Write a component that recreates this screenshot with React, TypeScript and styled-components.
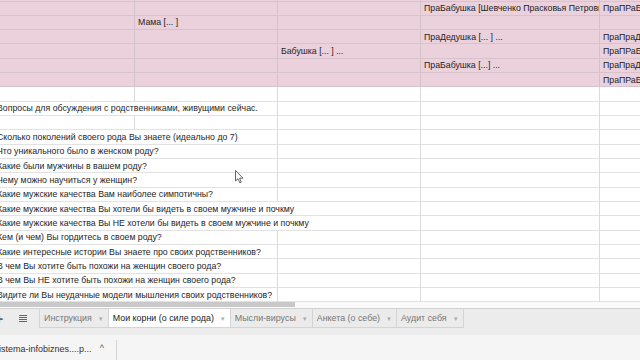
import React from "react";
import styled, { createGlobalStyle, css } from "styled-components";

const GlobalStyle = createGlobalStyle`
  html, body { margin: 0; padding: 0; background: #fff; overflow: hidden; }
  body { font-family: "Liberation Sans", Arial, sans-serif; }
`;

const ROW_H = 14.34;
const COLS = "141px 143px 143px 179px 120px";

const Page = styled.div`
  position: relative;
  width: 640px;
  height: 360px;
  overflow: hidden;
  display: flex;
  flex-direction: column;
  background: #fff;
`;

const SheetArea = styled.div`
  height: 302px;
  overflow: hidden;
  flex: none;
`;

const Rows = styled.div`
  margin-top: -12.84px;
  margin-left: -6px;
  display: flex;
  flex-direction: column;
`;

const Row = styled.div<{ $pink?: boolean }>`
  display: grid;
  grid-template-columns: ${COLS};
  height: ${ROW_H}px;
  flex: none;
  background: ${(p) => (p.$pink ? "#ead1dc" : "#fff")};
  --hline: ${(p) => (p.$pink ? "#d6c3cb" : "#e2e2e2")};
  --vline: ${(p) => (p.$pink ? "#d3c3c9" : "#dadada")};
`;

const Cell = styled.div<{ $span?: number }>`
  box-sizing: border-box;
  grid-column: span ${(p) => p.$span ?? 1};
  border-right: 1px solid var(--vline);
  border-bottom: 1px solid var(--hline);
  padding: 1.5px 3px 0 3px;
  font-size: 8.75px;
  line-height: ${ROW_H - 2.5}px;
  color: #1e1e1e;
  white-space: nowrap;
  overflow: hidden;
`;

const ScrollTrack = styled.div`
  height: 6px;
  flex: none;
  background: #fafafa;
`;

const ScrollThumb = styled.div`
  width: 295px;
  height: 5px;
  background: #c9c9c9;
`;

const TabBar = styled.div`
  height: 27px;
  flex: none;
  box-sizing: border-box;
  border-top: 1px solid #d2d2d2;
  background: #ececec;
  display: flex;
  align-items: flex-start;
`;

const AddBtn = styled.div`
  width: 12px;
  margin-left: -7px;
  height: 19px;
  display: flex;
  align-items: center;
  justify-content: center;
  color: #666;
  font-size: 14px;
  font-weight: bold;
`;

const MenuBtn = styled.div`
  width: 14px;
  margin-left: 11px;
  height: 19px;
  display: flex;
  align-items: center;
  justify-content: center;
`;

const Tabs = styled.div`
  display: flex;
  margin-left: 10px;
`;

const Tab = styled.div<{ $active?: boolean }>`
  height: 19px;
  box-sizing: border-box;
  display: flex;
  align-items: center;
  gap: 6px;
  padding: 0 4px 0 4px;
  border: 1px solid #d4d4d4;
  border-top: none;
  margin-left: -1px;
  font-size: 8.9px;
  color: #777;
  background: #ebebeb;
  ${(p) =>
    p.$active &&
    css`
      background: #fff;
      color: #222;
      position: relative;
      z-index: 1;
    `}
`;

const Caret = styled.span`
  font-size: 6px;
  color: #aaa;
  transform: translateY(1px);
`;

const Shelf = styled.div`
  flex: 1;
  background: #f5f5f5;
  display: flex;
  align-items: stretch;
`;

const DownloadItem = styled.div`
  width: 118px;
  margin-top: 5px;
  box-sizing: border-box;
  border-right: 1px solid #d3d3d3;
  display: flex;
  align-items: center;
  justify-content: space-between;
  padding: 0 12px 3px 0;
  margin-left: -1px;
  font-size: 9px;
  color: #333;
`;

const Chevron = styled.span`
  font-size: 9px;
  color: #555;
  transform: translateY(-1px);
`;

const CursorLayer = styled.div`
  position: absolute;
  left: 235px;
  top: 170px;
  width: 10px;
  height: 14px;
  pointer-events: none;
`;

type RowData = { pink?: boolean; cells: { text?: string; span?: number }[] };

const E = { text: "" };

const rows: RowData[] = [
  { pink: true, cells: [E, E, E, E, E] },
  {
    pink: true,
    cells: [E, E, E, { text: "ПраБабушка [Шевченко Прасковья Петровна]" }, { text: "ПраПРаБабушка [...]" }],
  },
  { pink: true, cells: [E, { text: "Мама [... ]" }, E, E, E] },
  { pink: true, cells: [E, E, E, { text: "ПраДедушка [... ] ..." }, { text: "ПраПраДедушка [...]" }] },
  { pink: true, cells: [E, E, { text: "Бабушка [... ] ..." }, E, { text: "ПраПРаБабушка [...]" }] },
  { pink: true, cells: [E, E, E, { text: "ПраБабушка [...] ..." }, { text: "ПраПраДедушка [...]" }] },
  { pink: true, cells: [E, E, E, E, { text: "ПраПРаБабушка [...]" }] },
  { cells: [E, E, E, E, E] },
  { cells: [{ text: "Вопросы для обсуждения с родственниками, живущими сейчас.", span: 2 }, E, E, E] },
  { cells: [E, E, E, E, E] },
  { cells: [{ text: "Сколько поколений своего рода Вы знаете (идеально до 7)", span: 2 }, E, E, E] },
  { cells: [{ text: "Что уникального было в женском роду?", span: 2 }, E, E, E] },
  { cells: [{ text: "Какие были мужчины в вашем роду?", span: 2 }, E, E, E] },
  { cells: [{ text: "Чему можно научиться у женщин?", span: 2 }, E, E, E] },
  { cells: [{ text: "Какие мужские качества Вам наиболее симпотичны?", span: 2 }, E, E, E] },
  { cells: [{ text: "Какие мужские качества Вы хотели бы видеть в своем мужчине и почкму", span: 3 }, E, E] },
  { cells: [{ text: "Какие мужские качества Вы НЕ хотели бы видеть в своем мужчине и почкму", span: 3 }, E, E] },
  { cells: [{ text: "Кем (и чем) Вы гордитесь в своем роду?", span: 2 }, E, E, E] },
  { cells: [{ text: "Какие интересные истории Вы знаете про своих родственников?", span: 2 }, E, E, E] },
  { cells: [{ text: "В чем Вы хотите быть похожи на женщин своего рода?", span: 2 }, E, E, E] },
  { cells: [{ text: "В чем Вы НЕ хотите быть похожи на женщин своего рода?", span: 2 }, E, E, E] },
  { cells: [{ text: "Видите ли Вы неудачные модели мышления своих родственников?", span: 2 }, E, E, E] },
  { cells: [E, E, E, E, E] },
];

const tabs = [
  { name: "Инструкция" },
  { name: "Мои корни (о силе рода)", active: true },
  { name: "Мысли-вирусы" },
  { name: "Анкета (о себе)" },
  { name: "Аудит себя" },
];

const MenuIcon = () => (
  <svg width="8" height="8" viewBox="0 0 8 8">
    {[0.5, 2.5, 4.5, 6.5].map((y) => (
      <line key={y} x1="0" x2="8" y1={y} y2={y} stroke="#666" strokeWidth="1" />
    ))}
  </svg>
);

const Cursor = () => (
  <svg width="10" height="14" viewBox="0 0 10 14">
    <path d="M0.5 0.5 L0.5 11 L3 8.7 L4.8 12.8 L6.3 12.1 L4.6 8.2 L8 8.2 Z" fill="#fff" stroke="#555" strokeWidth="0.9" strokeLinejoin="round" />
  </svg>
);

export default function App() {
  return (
    <Page>
      <GlobalStyle />
      <SheetArea>
        <Rows>
          {rows.map((r, i) => (
            <Row key={i} $pink={r.pink}>
              {r.cells.map((c, j) => (
                <Cell key={j} $span={c.span}>
                  {c.text}
                </Cell>
              ))}
            </Row>
          ))}
        </Rows>
      </SheetArea>
      <ScrollTrack>
        <ScrollThumb />
      </ScrollTrack>
      <TabBar>
        <AddBtn>+</AddBtn>
        <MenuBtn>
          <MenuIcon />
        </MenuBtn>
        <Tabs>
          {tabs.map((t) => (
            <Tab key={t.name} $active={t.active}>
              {t.name}
              <Caret>▼</Caret>
            </Tab>
          ))}
        </Tabs>
      </TabBar>
      <Shelf>
        <DownloadItem>
          <span>istema-infobiznes....p...</span>
          <Chevron>^</Chevron>
        </DownloadItem>
      </Shelf>
      <CursorLayer>
        <Cursor />
      </CursorLayer>
    </Page>
  );
}
